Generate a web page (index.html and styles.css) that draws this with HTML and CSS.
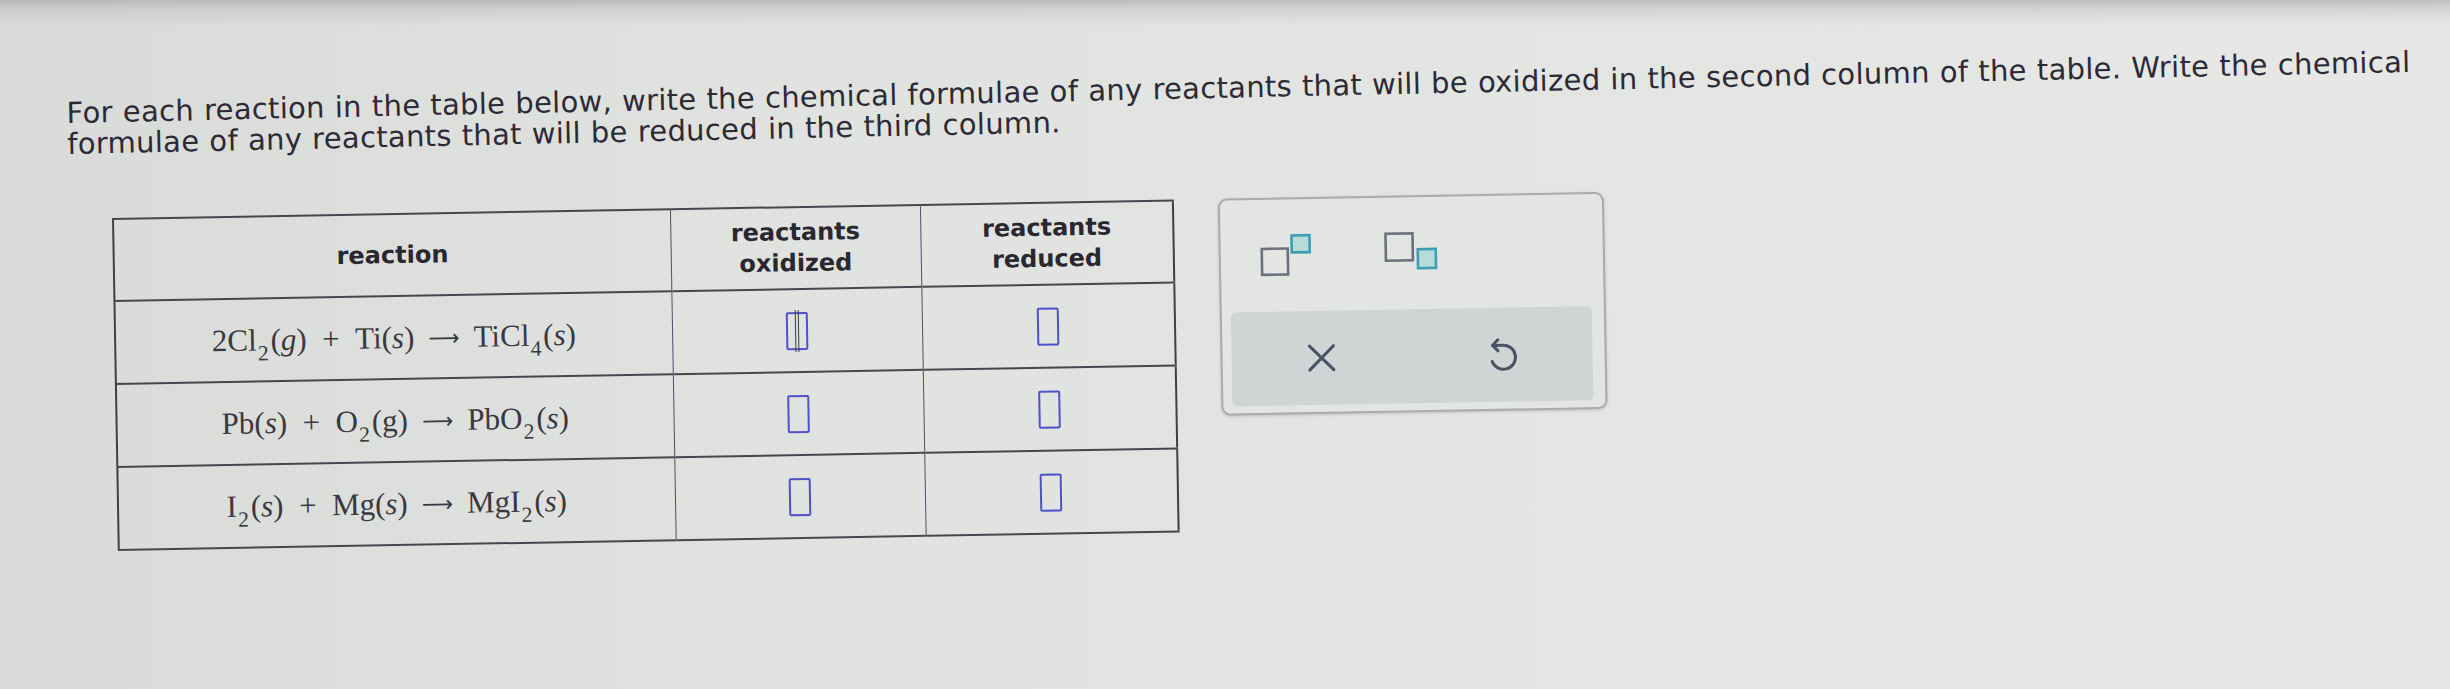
FILE: index.html
```html
<!DOCTYPE html>
<html lang="en">
<head>
<meta charset="utf-8">
<title>Oxidized and reduced reactants</title>
<link rel="stylesheet" href="styles.css">
</head>
<body>
<main class="page">
  <p class="prompt">For each reaction in the table below, write the chemical formulae of any reactants that will be oxidized in the second column of the table. Write the chemical<br>formulae of any reactants that will be reduced in the third column.</p>

  <div class="work">
    <table class="grid">
      <colgroup>
        <col class="col-reaction">
        <col class="col-answer">
        <col class="col-answer-last">
      </colgroup>
      <thead>
        <tr class="head-row">
          <th>reaction</th>
          <th>reactants<br>oxidized</th>
          <th>reactants<br>reduced</th>
        </tr>
      </thead>
      <tbody>
        <tr class="body-row">
          <td class="eq">2Cl<sub>2</sub>(<i>g</i>)<span class="op">+</span>Ti(<i>s</i>)<span class="arrow">⟶</span>TiCl<sub>4</sub>(<i>s</i>)</td>
          <td><span class="slot slot-active"></span></td>
          <td><span class="slot"></span></td>
        </tr>
        <tr class="body-row">
          <td class="eq">Pb(<i>s</i>)<span class="op">+</span>O<sub>2</sub>(g)<span class="arrow">⟶</span>PbO<sub>2</sub>(<i>s</i>)</td>
          <td><span class="slot"></span></td>
          <td><span class="slot"></span></td>
        </tr>
        <tr class="body-row">
          <td class="eq">I<sub>2</sub>(<i>s</i>)<span class="op">+</span>Mg(<i>s</i>)<span class="arrow">⟶</span>MgI<sub>2</sub>(<i>s</i>)</td>
          <td><span class="slot"></span></td>
          <td><span class="slot"></span></td>
        </tr>
      </tbody>
    </table>

    <div class="palette">
      <div class="palette-icons">
        <button class="tool" type="button" aria-label="superscript">
          <svg width="54" height="44" viewBox="0 0 54 44">
            <rect x="2" y="15" width="26" height="26" class="box-main"/>
            <rect x="32" y="2" width="18" height="17" class="box-small"/>
          </svg>
        </button>
        <button class="tool" type="button" aria-label="subscript">
          <svg width="54" height="44" viewBox="0 0 54 44">
            <rect x="2" y="2" width="27" height="27" class="box-main"/>
            <rect x="34" y="18" width="18" height="19" class="box-small"/>
          </svg>
        </button>
      </div>
      <div class="palette-bar">
        <button class="bar-btn" type="button" aria-label="clear">
          <svg width="30" height="30" viewBox="0 0 30 30">
            <path d="M3 3 L27 27 M27 3 L3 27" class="icon-stroke"/>
          </svg>
        </button>
        <button class="bar-btn" type="button" aria-label="undo">
          <svg width="36" height="38" viewBox="0 0 36 38">
            <path d="M13.5 4 L8 9.5 L13.5 15" class="icon-stroke"/>
            <path d="M8.5 9.5 H19 A12 12 0 1 1 7.5 25.5" class="icon-stroke"/>
          </svg>
        </button>
      </div>
    </div>
  </div>
</main>
</body>
</html>
```

FILE: styles.css
```css
html, body {
  margin: 0;
  padding: 0;
}

body {
  width: 2450px;
  height: 689px;
  overflow: hidden;
  background:
    linear-gradient(to bottom, rgba(150,152,150,0.5) 0px, rgba(170,172,170,0.28) 10px, rgba(200,202,200,0) 26px),
    linear-gradient(to right, #d9dbd8 0%, #e0e2df 30%, #e3e5e2 60%, #e7e8e6 100%);
  font-family: "DejaVu Sans", Verdana, sans-serif;
  color: #2c2a36;
}

.page {
  padding: 98px 0 0 67px;
}

.prompt {
  margin: 0;
  font-size: 29px;
  line-height: 31px;
  letter-spacing: 0.3px;
  word-spacing: 0.5px;
  white-space: nowrap;
  transform: rotate(-1.25deg);
  transform-origin: 0 50%;
}

.work {
  display: flex;
  align-items: flex-start;
  gap: 44px;
  margin: 58px 0 0 45px;
  transform: rotate(-1deg);
  transform-origin: 0 0;
}

/* ---------- table ---------- */
.grid {
  border-collapse: collapse;
  table-layout: fixed;
  width: 1060px;
  border: 2px solid #403f48;
}

.col-reaction { width: 557px; }
.col-answer { width: 250px; }
.col-answer-last { width: 253px; }

.grid th,
.grid td {
  padding: 0;
  text-align: center;
  vertical-align: middle;
  border-top: 2px solid #47464f;
  border-bottom: 2px solid #47464f;
  border-left: 1.5px solid #4d4c6c;
  border-right: 1.5px solid #4d4c6c;
}

.head-row { height: 82px; }
.body-row { height: 83px; }

.grid th {
  font-weight: bold;
  font-size: 24px;
  line-height: 31px;
  color: #29272f;
}

.eq {
  font-family: "Liberation Serif", "Times New Roman", serif;
  font-size: 31px;
  color: #3a3842;
  white-space: nowrap;
}

.eq i {
  font-style: italic;
}

.eq sub {
  font-size: 70%;
  vertical-align: -0.5em;
  line-height: 0;
  margin: 0 2px 0 1px;
}

.op {
  margin: 0 0.5em;
}

.arrow {
  font-family: "DejaVu Sans", sans-serif;
  font-size: 0.7em;
  margin: 0 0.65em;
  vertical-align: 0.08em;
}

.slot {
  display: inline-block;
  vertical-align: middle;
  width: 22px;
  height: 38px;
  box-sizing: border-box;
  border: 2.5px solid #4f51cc;
  border-radius: 2px;
  position: relative;
}

.slot-active::after {
  content: "";
  position: absolute;
  left: 7px;
  top: -4px;
  width: 4px;
  height: 42px;
  border-left: 1.5px solid #3a3a44;
  border-right: 1.5px solid #3a3a44;
  box-sizing: border-box;
}

/* ---------- palette ---------- */
.palette {
  width: 386px;
  height: 217px;
  box-sizing: border-box;
  border: 2px solid #a9acac;
  border-radius: 9px;
  background: #e3e5e3;
  box-shadow: 0 1px 3px rgba(120,124,124,0.35);
  padding: 34px 12px 7px 9px;
  display: flex;
  flex-direction: column;
}

.palette-icons {
  display: flex;
  gap: 70px;
  padding-left: 30px;
  height: 44px;
}

.tool {
  border: 0;
  padding: 0;
  margin: 0;
  background: transparent;
  width: 54px;
  height: 44px;
}

.box-main {
  fill: none;
  stroke: #6d707b;
  stroke-width: 2.6;
}

.box-small {
  fill: #b6dbd8;
  stroke: #3c9db3;
  stroke-width: 2.6;
}

.palette-bar {
  margin-top: 34px;
  height: 94px;
  border-radius: 5px;
  background: #cfd4d5;
  display: grid;
  grid-template-columns: 1fr 1fr;
  align-items: center;
  justify-items: center;
}

.bar-btn {
  border: 0;
  padding: 0;
  margin: 0;
  background: transparent;
  display: flex;
  align-items: center;
  justify-content: center;
}

.icon-stroke {
  fill: none;
  stroke: #4a5263;
  stroke-width: 3;
  stroke-linecap: round;
  stroke-linejoin: round;
}
```
